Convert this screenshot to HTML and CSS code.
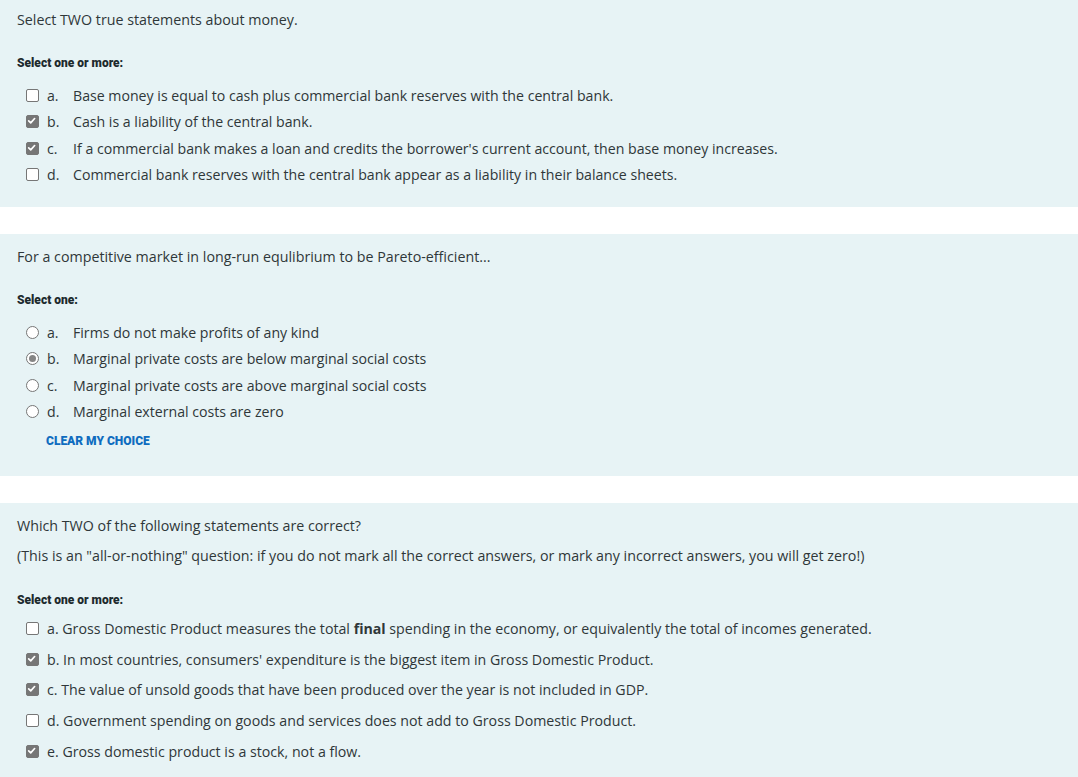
FILE: index.html
```html
<!DOCTYPE html>
<html>
<head>
<meta charset="utf-8">
<link rel="stylesheet" href="styles.css">
</head>
<body>
<div class="page">

  <section class="panel panel-first">
    <p class="qtext">Select TWO true statements about money.</p>
    <div class="prompt">Select one or more:</div>
    <div class="answers">
      <div class="opt"><span class="cb"></span><span class="letter">a.</span><span class="text">Base money is equal to cash plus commercial bank reserves with the central bank.</span></div>
      <div class="opt"><span class="cb on"><svg viewBox="0 0 13 13"><path d="M3 6.8 L5.4 9.1 L10 4" /></svg></span><span class="letter">b.</span><span class="text">Cash is a liability of the central bank.</span></div>
      <div class="opt"><span class="cb on"><svg viewBox="0 0 13 13"><path d="M3 6.8 L5.4 9.1 L10 4" /></svg></span><span class="letter">c.</span><span class="text">If a commercial bank makes a loan and credits the borrower's current account, then base money increases.</span></div>
      <div class="opt"><span class="cb"></span><span class="letter">d.</span><span class="text">Commercial bank reserves with the central bank appear as a liability in their balance sheets.</span></div>
    </div>
  </section>

  <section class="panel panel-radio">
    <p class="qtext">For a competitive market in long-run equlibrium to be Pareto-efficient...</p>
    <div class="prompt">Select one:</div>
    <div class="answers">
      <div class="opt"><span class="rb"></span><span class="letter">a.</span><span class="text">Firms do not make profits of any kind</span></div>
      <div class="opt"><span class="rb on"></span><span class="letter">b.</span><span class="text">Marginal private costs are below marginal social costs</span></div>
      <div class="opt"><span class="rb"></span><span class="letter">c.</span><span class="text">Marginal private costs are above marginal social costs</span></div>
      <div class="opt"><span class="rb"></span><span class="letter">d.</span><span class="text">Marginal external costs are zero</span></div>
    </div>
    <a class="clear" href="#">CLEAR MY CHOICE</a>
  </section>

  <section class="panel panel-last">
    <p class="qtext">Which TWO of the following statements are correct?</p>
    <p class="qtext">(This is an "all-or-nothing" question: if you do not mark all the correct answers, or mark any incorrect answers, you will get zero!)</p>
    <div class="prompt">Select one or more:</div>
    <div class="answers wide">
      <div class="opt"><span class="cb"></span><span class="inline">a. Gross Domestic Product measures the total <b>final</b> spending in the economy, or equivalently the total of incomes generated.</span></div>
      <div class="opt"><span class="cb on"><svg viewBox="0 0 13 13"><path d="M3 6.8 L5.4 9.1 L10 4" /></svg></span><span class="inline">b. In most countries, consumers' expenditure is the biggest item in Gross Domestic Product.</span></div>
      <div class="opt"><span class="cb on"><svg viewBox="0 0 13 13"><path d="M3 6.8 L5.4 9.1 L10 4" /></svg></span><span class="inline">c. The value of unsold goods that have been produced over the year is not included in GDP.</span></div>
      <div class="opt"><span class="cb"></span><span class="inline">d. Government spending on goods and services does not add to Gross Domestic Product.</span></div>
      <div class="opt"><span class="cb on"><svg viewBox="0 0 13 13"><path d="M3 6.8 L5.4 9.1 L10 4" /></svg></span><span class="inline">e. Gross domestic product is a stock, not a flow.</span></div>
    </div>
  </section>

</div>
</body>
</html>
```

FILE: styles.css
```css
html, body {
  margin: 0;
  padding: 0;
  background: #ffffff;
}

body {
  font-family: "Open Sans", "Liberation Sans", sans-serif;
  color: #2f3739;
  font-size: 14px;
}

.page {
  margin-top: -3px;
  display: flex;
  flex-direction: column;
  gap: 27px;
}

.panel {
  background: #e7f3f5;
  padding: 13px 17px 0 17px;
}

.panel-first {
  height: 197px;
}

.panel-radio {
  height: 229px;
}

.panel-last {
  height: 290px;
}

.qtext {
  margin: 0 0 10px 0;
  font-size: 14.25px;
  line-height: 20px;
}

.prompt {
  margin-top: 25px;
  font-family: Roboto, "Liberation Sans", sans-serif;
  font-weight: 900;
  font-size: 12px;
  line-height: 16px;
  color: #1d2a2e;
}

.panel-last .prompt {
  margin-top: 26px;
}

.answers {
  margin-top: 11px;
  padding-left: 9px;
}

.answers.wide {
  margin-top: 5px;
}

.opt {
  display: flex;
  align-items: center;
  height: 26.5px;
  font-size: 14.15px;
}

.answers.wide .opt {
  height: 30.75px;
  font-size: 14.2px;
}

.letter {
  width: 26px;
  margin-left: 8px;
}

.inline {
  margin-left: 8px;
}

.cb {
  box-sizing: border-box;
  width: 13px;
  height: 13px;
  border: 1px solid #767676;
  border-radius: 2px;
  background: #ffffff;
  display: inline-flex;
  flex: none;
}

.cb.on {
  background: #767676;
  border-color: #767676;
}

.cb svg {
  width: 11px;
  height: 11px;
  margin: 0;
}

.cb svg path {
  fill: none;
  stroke: #ffffff;
  stroke-width: 2;
  stroke-linecap: round;
  stroke-linejoin: round;
  transform: translate(-1px, -1px);
}

.rb {
  box-sizing: border-box;
  width: 13px;
  height: 13px;
  border: 1px solid #767676;
  border-radius: 50%;
  background: #ffffff;
  flex: none;
  display: inline-flex;
  align-items: center;
  justify-content: center;
}

.rb.on::after {
  content: "";
  width: 7px;
  height: 7px;
  border-radius: 50%;
  background: #858585;
}

.clear {
  display: block;
  margin-top: 8px;
  margin-left: 29px;
  font-family: Roboto, "Liberation Sans", sans-serif;
  font-weight: 900;
  font-size: 12px;
  line-height: 16px;
  color: #0f6cbf;
  text-decoration: none;
}
```
